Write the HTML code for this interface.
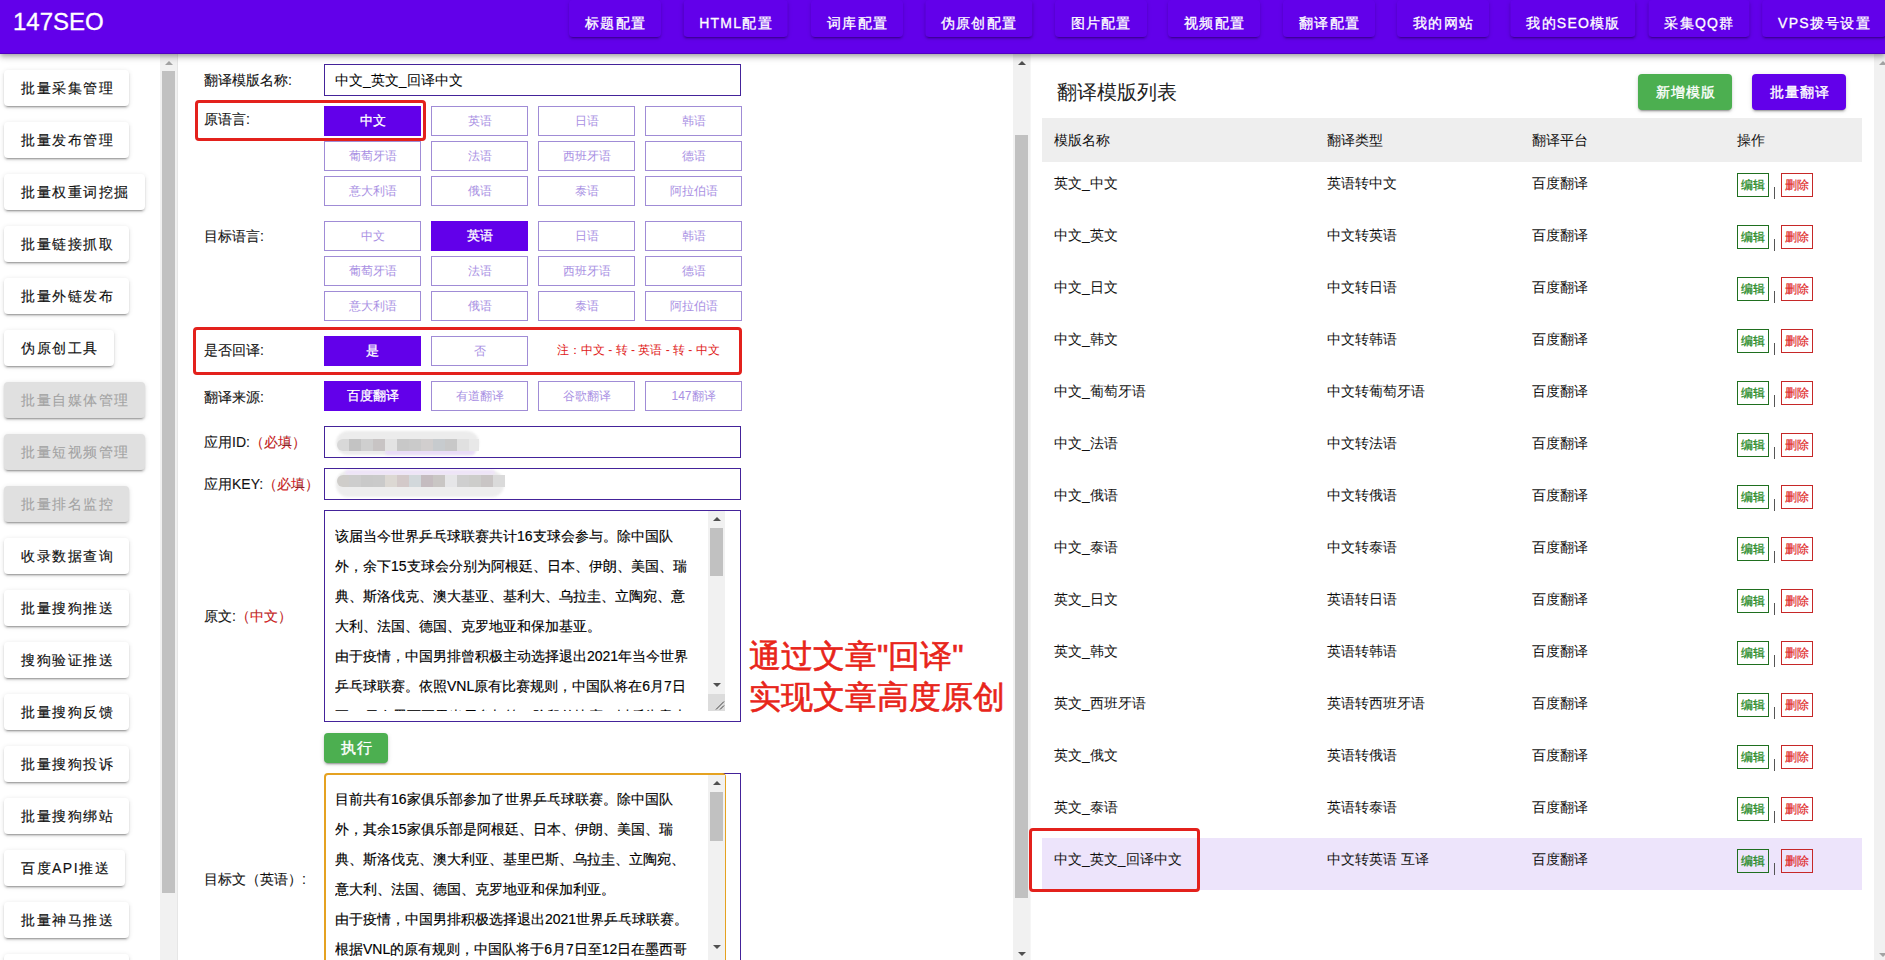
<!DOCTYPE html>
<html><head><meta charset="utf-8">
<style>
*{box-sizing:border-box;margin:0;padding:0}
html,body{width:1885px;height:960px;overflow:hidden;background:#fff;font-family:"Liberation Sans",sans-serif;color:#222}
.abs{position:absolute}
#hdr{position:absolute;left:0;top:0;width:1885px;height:54px;background:#6200ea;box-shadow:inset 0 -1px 0 #4f00c0,0 2px 4px -1px rgba(0,0,0,.2),0 4px 5px 0 rgba(0,0,0,.14),0 1px 10px 0 rgba(0,0,0,.12);z-index:5}
#logo{position:absolute;left:13px;top:8px;font-size:24px;color:#fff;line-height:28px;-webkit-text-stroke:0.3px #fff}
.nav{position:absolute;top:0px;-webkit-text-stroke:0.3px #fff;transform:translateX(-50%);padding:13px 15px 0 16px;white-space:nowrap;height:37px;line-height:20px;color:#fff;font-size:14px;letter-spacing:1.25px;text-align:center;border-radius:4px;box-shadow:0 3px 1px -2px rgba(0,0,0,.2),0 2px 2px 0 rgba(0,0,0,.14),0 1px 5px 0 rgba(0,0,0,.12)}
.sb{position:absolute;background:#f1f1f1}
.sbt{position:absolute;background:#c1c1c1}
.arr{position:absolute;width:0;height:0;border-left:4px solid transparent;border-right:4px solid transparent}
.au{border-bottom:4px solid #505050}
.ad{border-top:4px solid #505050}
.sbtn{position:absolute;left:4px;height:36px;line-height:36px;font-size:14px;letter-spacing:1.5px;color:#111;background:#fff;-webkit-text-stroke:0.15px #111;border-radius:4px;padding:0 15px 0 17px;white-space:nowrap;box-shadow:0 3px 1px -2px rgba(0,0,0,.2),0 2px 2px 0 rgba(0,0,0,.14),0 1px 5px 0 rgba(0,0,0,.12)}
.sbtn.dis{background:#e0e0e0;color:#a3a3a3;-webkit-text-stroke:0.1px #a3a3a3;box-shadow:0 3px 1px -2px rgba(0,0,0,.2),0 2px 2px 0 rgba(0,0,0,.14),0 1px 5px 0 rgba(0,0,0,.12)}
.lbl{position:absolute;left:204px;font-size:14px;color:#111;-webkit-text-stroke:0.1px #111;line-height:20px}
.req{color:#e02020}
.inp{position:absolute;left:324px;width:417px;height:32px;border:1px solid #44239a;}
.lb{position:absolute;width:97px;height:30px;border:1px solid #a08cd6;color:#a990e3;font-size:12px;text-align:center;line-height:28px}
.lb.on{background:#6200ea;border-color:#6200ea;color:#fff;font-size:13px;-webkit-text-stroke:0.3px #fff}
.redbox{position:absolute;border:3px solid #e3211c;border-radius:4px}
.blur{position:absolute;top:7px;height:16px;border-radius:8px;background:linear-gradient(90deg,#d8d8d8,#cfcfcf 30%,#dadada 60%,#e4e4e4);filter:blur(1.5px)}
.td{position:absolute;font-size:14px;line-height:20px;color:#111;white-space:nowrap}
.ed,.del{position:absolute;width:32px;height:24px;border:1px solid #1f6f1f;color:#168516;-webkit-text-stroke:0.2px #168516;font-size:12px;line-height:22px;text-align:center}
.del{border-color:#c62828;color:#e02828;-webkit-text-stroke:0.2px #e02828}
.ta{position:absolute;font-size:14px;line-height:30px;color:#000;-webkit-text-stroke:0.15px #000;overflow:hidden}
</style></head><body>
<div id="hdr">
  <div id="logo">147SEO</div>
<div class="nav" style="left:615px">标题配置</div><div class="nav" style="left:735.5px">HTML配置</div><div class="nav" style="left:857px">词库配置</div><div class="nav" style="left:978.5px">伪原创配置</div><div class="nav" style="left:1100.5px">图片配置</div><div class="nav" style="left:1214px">视频配置</div><div class="nav" style="left:1329px">翻译配置</div><div class="nav" style="left:1443px">我的网站</div><div class="nav" style="left:1573px">我的SEO模版</div><div class="nav" style="left:1699px">采集QQ群</div><div class="nav" style="left:1824px">VPS拨号设置</div>
</div>
<div class="sbtn" style="top:70px">批量采集管理</div>
<div class="sbtn" style="top:122px">批量发布管理</div>
<div class="sbtn" style="top:174px">批量权重词挖掘</div>
<div class="sbtn" style="top:226px">批量链接抓取</div>
<div class="sbtn" style="top:278px">批量外链发布</div>
<div class="sbtn" style="top:330px">伪原创工具</div>
<div class="sbtn dis" style="top:382px">批量自媒体管理</div>
<div class="sbtn dis" style="top:434px">批量短视频管理</div>
<div class="sbtn dis" style="top:486px">批量排名监控</div>
<div class="sbtn" style="top:538px">收录数据查询</div>
<div class="sbtn" style="top:590px">批量搜狗推送</div>
<div class="sbtn" style="top:642px">搜狗验证推送</div>
<div class="sbtn" style="top:694px">批量搜狗反馈</div>
<div class="sbtn" style="top:746px">批量搜狗投诉</div>
<div class="sbtn" style="top:798px">批量搜狗绑站</div>
<div class="sbtn" style="top:850px">百度API推送</div>
<div class="sbtn" style="top:902px">批量神马推送</div>
<div class="sbtn" style="top:954px">批量神马推送</div>
<div class="sb" style="left:160px;top:54px;width:17px;height:906px"></div>
<div class="sbt" style="left:162px;top:71px;width:13px;height:822px"></div>
<div class="arr au" style="left:164.5px;top:61px;border-bottom-color:#a3a3a3"></div>
<div class="abs" style="left:177px;top:54px;width:1px;height:906px;background:#e6e6e6"></div>
<div class="sb" style="left:1013px;top:54px;width:17px;height:906px"></div><div class="abs" style="left:1030px;top:54px;width:1px;height:906px;background:#f6f6f6"></div>
<div class="sbt" style="left:1015px;top:135px;width:13px;height:763px"></div>
<div class="arr au" style="left:1017.5px;top:61px"></div>
<div class="arr ad" style="left:1017.5px;top:952px"></div>
<div class="sb" style="left:1874px;top:54px;width:17px;height:906px"></div>
<div class="arr au" style="left:1879px;top:61px;border-bottom-color:#a3a3a3"></div>
<div class="arr ad" style="left:1879px;top:953px;border-top-color:#a3a3a3"></div>
<div class="lbl" style="top:70px">翻译模版名称:</div>
<div class="inp" style="top:64px"><span style="position:absolute;left:10px;top:5px;font-size:14px;line-height:20px;color:#000">中文_英文_回译中文</span></div>
<div class="lbl" style="top:109px">原语言:</div>
<div class="lb on" style="left:324px;top:106px">中文</div>
<div class="lb" style="left:431px;top:106px">英语</div>
<div class="lb" style="left:538px;top:106px">日语</div>
<div class="lb" style="left:645px;top:106px">韩语</div>
<div class="lb" style="left:324px;top:141px">葡萄牙语</div>
<div class="lb" style="left:431px;top:141px">法语</div>
<div class="lb" style="left:538px;top:141px">西班牙语</div>
<div class="lb" style="left:645px;top:141px">德语</div>
<div class="lb" style="left:324px;top:176px">意大利语</div>
<div class="lb" style="left:431px;top:176px">俄语</div>
<div class="lb" style="left:538px;top:176px">泰语</div>
<div class="lb" style="left:645px;top:176px">阿拉伯语</div>
<div class="lbl" style="top:226px">目标语言:</div>
<div class="lb" style="left:324px;top:221px">中文</div>
<div class="lb on" style="left:431px;top:221px">英语</div>
<div class="lb" style="left:538px;top:221px">日语</div>
<div class="lb" style="left:645px;top:221px">韩语</div>
<div class="lb" style="left:324px;top:256px">葡萄牙语</div>
<div class="lb" style="left:431px;top:256px">法语</div>
<div class="lb" style="left:538px;top:256px">西班牙语</div>
<div class="lb" style="left:645px;top:256px">德语</div>
<div class="lb" style="left:324px;top:291px">意大利语</div>
<div class="lb" style="left:431px;top:291px">俄语</div>
<div class="lb" style="left:538px;top:291px">泰语</div>
<div class="lb" style="left:645px;top:291px">阿拉伯语</div>
<div class="lbl" style="top:340px">是否回译:</div>
<div class="lb on" style="left:324px;top:336px">是</div>
<div class="lb" style="left:431px;top:336px">否</div>
<div class="abs" style="left:557px;top:341px;font-size:12px;line-height:18px;color:#e02020">注：中文 - 转 - 英语 - 转 - 中文</div>
<div class="lbl" style="top:387px">翻译来源:</div>
<div class="lb on" style="left:324px;top:381px">百度翻译</div>
<div class="lb" style="left:431px;top:381px">有道翻译</div>
<div class="lb" style="left:538px;top:381px">谷歌翻译</div>
<div class="lb" style="left:645px;top:381px">147翻译</div>
<div class="lbl" style="top:432px">应用ID:<span class="req">（必填）</span></div>
<div class="inp" style="top:426px;overflow:hidden"><div class="abs" style="left:11px;top:4px;width:143px;height:24px;border-radius:12px;background:#ececec;filter:blur(1px)"></div><div class="abs" style="left:60px;top:21px;width:90px;height:7px;border-radius:4px;background:#e9dcf7;filter:blur(1px)"></div><div class="abs" style="left:12px;top:12px;width:142px;height:12px;background:linear-gradient(90deg,#d8d8d8 0px 12px,#c3c3c3 12px 24px,#cfcfcf 24px 36px,#c8c4c4 36px 48px,#e3e3e3 48px 60px,#c8c8c8 60px 72px,#cacaca 72px 84px,#d1cece 84px 96px,#c7cbce 96px 108px,#c8c8c8 108px 120px,#e0e0e0 120px 132px,#e8e8e8 132px 144px);border-radius:6px 0 0 6px"></div></div>
<div class="lbl" style="top:474px">应用KEY:<span class="req">（必填）</span></div>
<div class="inp" style="top:468px;overflow:hidden"><div class="abs" style="left:11px;top:2px;width:168px;height:26px;border-radius:12px;background:#ededed;filter:blur(1px)"></div><div class="abs" style="left:20px;top:1px;width:150px;height:5px;border-radius:4px;background:#eee4f8;filter:blur(1px)"></div><div class="abs" style="left:12px;top:6px;width:168px;height:12px;background:linear-gradient(90deg,#cfcdca 0px 12px,#cdcdcd 12px 24px,#c9c9c9 24px 36px,#cacaca 36px 48px,#dcd8d3 48px 60px,#d3c9c9 60px 72px,#d2d8db 72px 84px,#c5bcc0 84px 96px,#c9c6c4 96px 108px,#e6e6e8 108px 120px,#cfcfcf 120px 132px,#cdcdcb 132px 144px,#c9c5c5 144px 156px,#dadada 156px 168px);border-radius:6px 0 0 6px"></div></div>
<div class="lbl" style="top:606px">原文:<span class="req">（中文）</span></div>
<div class="abs" style="left:324px;top:510px;width:417px;height:212px;border:1px solid #44239a"></div>
<div class="ta" style="left:335px;top:521px;width:370px;height:190px"><div style="white-space:nowrap">该届当今世界乒乓球联赛共计16支球会参与。除中国队</div><div style="white-space:nowrap">外，余下15支球会分别为阿根廷、日本、伊朗、美国、瑞</div><div style="white-space:nowrap">典、斯洛伐克、澳大基亚、基利大、乌拉圭、立陶宛、意</div><div style="white-space:nowrap">大利、法国、德国、克罗地亚和保加基亚。</div><div style="white-space:nowrap">由于疫情，中国男排曾积极主动选择退出2021年当今世界</div><div style="white-space:nowrap">乒乓球联赛。依照VNL原有比赛规则，中国队将在6月7日</div><div style="white-space:nowrap">至12日在墨西哥里米尼参与第一阶段的比赛，以后为意大</div></div>
<div class="sb" style="left:708px;top:511px;width:17px;height:200px"></div>
<div class="sbt" style="left:710px;top:528px;width:13px;height:48px"></div>
<div class="arr au" style="left:712.5px;top:517px"></div>
<div class="arr ad" style="left:712.5px;top:683px"></div>
<div class="abs" style="left:708px;top:694px;width:17px;height:17px;background:#dcdcdc"><svg width="17" height="17" style="position:absolute;left:0;top:0"><path d="M8 15.5L16 7.5M12 15.5L16 11.5" stroke="#444" stroke-width="1"/></svg></div>
<div class="abs" style="left:324px;top:733px;width:64px;height:30px;background:#4caf50;border-radius:4px;color:#fff;font-size:15px;line-height:30px;text-align:center;letter-spacing:1px;text-indent:1px;-webkit-text-stroke:0.35px #fff;box-shadow:0 3px 1px -2px rgba(0,0,0,.2),0 2px 2px 0 rgba(0,0,0,.14),0 1px 5px 0 rgba(0,0,0,.12)">执行</div>
<div class="lbl" style="top:869px">目标文（英语）:</div>
<div class="abs" style="left:700px;top:773px;width:41px;height:200px;border:1px solid #44239a;border-left:none"></div>
<div class="abs" style="left:324px;top:773px;width:402px;height:200px;border:2px solid #e5a221;border-radius:4px;background:#fff"></div>
<div class="ta" style="left:335px;top:784px;width:370px;height:176px"><div style="white-space:nowrap">目前共有16家俱乐部参加了世界乒乓球联赛。除中国队</div><div style="white-space:nowrap">外，其余15家俱乐部是阿根廷、日本、伊朗、美国、瑞</div><div style="white-space:nowrap">典、斯洛伐克、澳大利亚、基里巴斯、乌拉圭、立陶宛、</div><div style="white-space:nowrap">意大利、法国、德国、克罗地亚和保加利亚。</div><div style="white-space:nowrap">由于疫情，中国男排积极选择退出2021世界乒乓球联赛。</div><div style="white-space:nowrap">根据VNL的原有规则，中国队将于6月7日至12日在墨西哥</div><div style="white-space:nowrap">参加第一阶段的比赛，然后前往意大利</div></div>
<div class="sb" style="left:708px;top:775px;width:17px;height:200px"></div>
<div class="sbt" style="left:710px;top:792px;width:13px;height:49px"></div>
<div class="arr au" style="left:712.5px;top:781px"></div>
<div class="arr ad" style="left:712.5px;top:945px"></div>
<div class="redbox" style="left:195px;top:100px;width:231px;height:41px"></div>
<div class="redbox" style="left:193px;top:327px;width:549px;height:48px"></div>
<div class="abs" style="left:749px;top:636px;font-size:32px;line-height:41px;color:#e8251a;-webkit-text-stroke:0.6px #e8251a;white-space:nowrap">通过文章"回译"<br>实现文章高度原创</div>
<div class="abs" style="left:1057px;top:80px;font-size:20px;line-height:24px;color:#222;white-space:nowrap">翻译模版列表</div>
<div class="abs" style="left:1638px;top:74px;width:94px;height:36px;background:#4caf50;border-radius:4px;color:#fff;font-size:14px;line-height:36px;text-align:center;letter-spacing:1px;text-indent:1px;-webkit-text-stroke:0.35px #fff;box-shadow:0 3px 1px -2px rgba(0,0,0,.2),0 2px 2px 0 rgba(0,0,0,.14),0 1px 5px 0 rgba(0,0,0,.12)">新增模版</div>
<div class="abs" style="left:1752px;top:74px;width:94px;height:36px;background:#6200ea;border-radius:4px;color:#fff;font-size:14px;line-height:36px;text-align:center;letter-spacing:1px;text-indent:1px;-webkit-text-stroke:0.35px #fff;box-shadow:0 3px 1px -2px rgba(0,0,0,.2),0 2px 2px 0 rgba(0,0,0,.14),0 1px 5px 0 rgba(0,0,0,.12)">批量翻译</div>
<div class="abs" style="left:1042px;top:118px;width:820px;height:44px;background:#eeeeee"></div>
<div class="td" style="left:1054px;top:130px">模版名称</div>
<div class="td" style="left:1327px;top:130px">翻译类型</div>
<div class="td" style="left:1532px;top:130px">翻译平台</div>
<div class="td" style="left:1737px;top:130px">操作</div>
<div class="td" style="left:1054px;top:173px">英文_中文</div>
<div class="td" style="left:1327px;top:173px">英语转中文</div>
<div class="td" style="left:1532px;top:173px">百度翻译</div>
<div class="ed" style="left:1737px;top:173px">编辑</div>
<div class="abs" style="left:1774px;top:187px;width:1px;height:12px;background:#555"></div>
<div class="del" style="left:1781px;top:173px">删除</div>
<div class="td" style="left:1054px;top:225px">中文_英文</div>
<div class="td" style="left:1327px;top:225px">中文转英语</div>
<div class="td" style="left:1532px;top:225px">百度翻译</div>
<div class="ed" style="left:1737px;top:225px">编辑</div>
<div class="abs" style="left:1774px;top:239px;width:1px;height:12px;background:#555"></div>
<div class="del" style="left:1781px;top:225px">删除</div>
<div class="td" style="left:1054px;top:277px">中文_日文</div>
<div class="td" style="left:1327px;top:277px">中文转日语</div>
<div class="td" style="left:1532px;top:277px">百度翻译</div>
<div class="ed" style="left:1737px;top:277px">编辑</div>
<div class="abs" style="left:1774px;top:291px;width:1px;height:12px;background:#555"></div>
<div class="del" style="left:1781px;top:277px">删除</div>
<div class="td" style="left:1054px;top:329px">中文_韩文</div>
<div class="td" style="left:1327px;top:329px">中文转韩语</div>
<div class="td" style="left:1532px;top:329px">百度翻译</div>
<div class="ed" style="left:1737px;top:329px">编辑</div>
<div class="abs" style="left:1774px;top:343px;width:1px;height:12px;background:#555"></div>
<div class="del" style="left:1781px;top:329px">删除</div>
<div class="td" style="left:1054px;top:381px">中文_葡萄牙语</div>
<div class="td" style="left:1327px;top:381px">中文转葡萄牙语</div>
<div class="td" style="left:1532px;top:381px">百度翻译</div>
<div class="ed" style="left:1737px;top:381px">编辑</div>
<div class="abs" style="left:1774px;top:395px;width:1px;height:12px;background:#555"></div>
<div class="del" style="left:1781px;top:381px">删除</div>
<div class="td" style="left:1054px;top:433px">中文_法语</div>
<div class="td" style="left:1327px;top:433px">中文转法语</div>
<div class="td" style="left:1532px;top:433px">百度翻译</div>
<div class="ed" style="left:1737px;top:433px">编辑</div>
<div class="abs" style="left:1774px;top:447px;width:1px;height:12px;background:#555"></div>
<div class="del" style="left:1781px;top:433px">删除</div>
<div class="td" style="left:1054px;top:485px">中文_俄语</div>
<div class="td" style="left:1327px;top:485px">中文转俄语</div>
<div class="td" style="left:1532px;top:485px">百度翻译</div>
<div class="ed" style="left:1737px;top:485px">编辑</div>
<div class="abs" style="left:1774px;top:499px;width:1px;height:12px;background:#555"></div>
<div class="del" style="left:1781px;top:485px">删除</div>
<div class="td" style="left:1054px;top:537px">中文_泰语</div>
<div class="td" style="left:1327px;top:537px">中文转泰语</div>
<div class="td" style="left:1532px;top:537px">百度翻译</div>
<div class="ed" style="left:1737px;top:537px">编辑</div>
<div class="abs" style="left:1774px;top:551px;width:1px;height:12px;background:#555"></div>
<div class="del" style="left:1781px;top:537px">删除</div>
<div class="td" style="left:1054px;top:589px">英文_日文</div>
<div class="td" style="left:1327px;top:589px">英语转日语</div>
<div class="td" style="left:1532px;top:589px">百度翻译</div>
<div class="ed" style="left:1737px;top:589px">编辑</div>
<div class="abs" style="left:1774px;top:603px;width:1px;height:12px;background:#555"></div>
<div class="del" style="left:1781px;top:589px">删除</div>
<div class="td" style="left:1054px;top:641px">英文_韩文</div>
<div class="td" style="left:1327px;top:641px">英语转韩语</div>
<div class="td" style="left:1532px;top:641px">百度翻译</div>
<div class="ed" style="left:1737px;top:641px">编辑</div>
<div class="abs" style="left:1774px;top:655px;width:1px;height:12px;background:#555"></div>
<div class="del" style="left:1781px;top:641px">删除</div>
<div class="td" style="left:1054px;top:693px">英文_西班牙语</div>
<div class="td" style="left:1327px;top:693px">英语转西班牙语</div>
<div class="td" style="left:1532px;top:693px">百度翻译</div>
<div class="ed" style="left:1737px;top:693px">编辑</div>
<div class="abs" style="left:1774px;top:707px;width:1px;height:12px;background:#555"></div>
<div class="del" style="left:1781px;top:693px">删除</div>
<div class="td" style="left:1054px;top:745px">英文_俄文</div>
<div class="td" style="left:1327px;top:745px">英语转俄语</div>
<div class="td" style="left:1532px;top:745px">百度翻译</div>
<div class="ed" style="left:1737px;top:745px">编辑</div>
<div class="abs" style="left:1774px;top:759px;width:1px;height:12px;background:#555"></div>
<div class="del" style="left:1781px;top:745px">删除</div>
<div class="td" style="left:1054px;top:797px">英文_泰语</div>
<div class="td" style="left:1327px;top:797px">英语转泰语</div>
<div class="td" style="left:1532px;top:797px">百度翻译</div>
<div class="ed" style="left:1737px;top:797px">编辑</div>
<div class="abs" style="left:1774px;top:811px;width:1px;height:12px;background:#555"></div>
<div class="del" style="left:1781px;top:797px">删除</div>
<div class="abs" style="left:1042px;top:838px;width:820px;height:52px;background:#ede4fb"></div>
<div class="td" style="left:1054px;top:849px">中文_英文_回译中文</div>
<div class="td" style="left:1327px;top:849px">中文转英语 互译</div>
<div class="td" style="left:1532px;top:849px">百度翻译</div>
<div class="ed" style="left:1737px;top:849px">编辑</div>
<div class="abs" style="left:1774px;top:863px;width:1px;height:12px;background:#555"></div>
<div class="del" style="left:1781px;top:849px">删除</div>
<div class="redbox" style="left:1029px;top:828px;width:171px;height:64px"></div>
</body></html>
